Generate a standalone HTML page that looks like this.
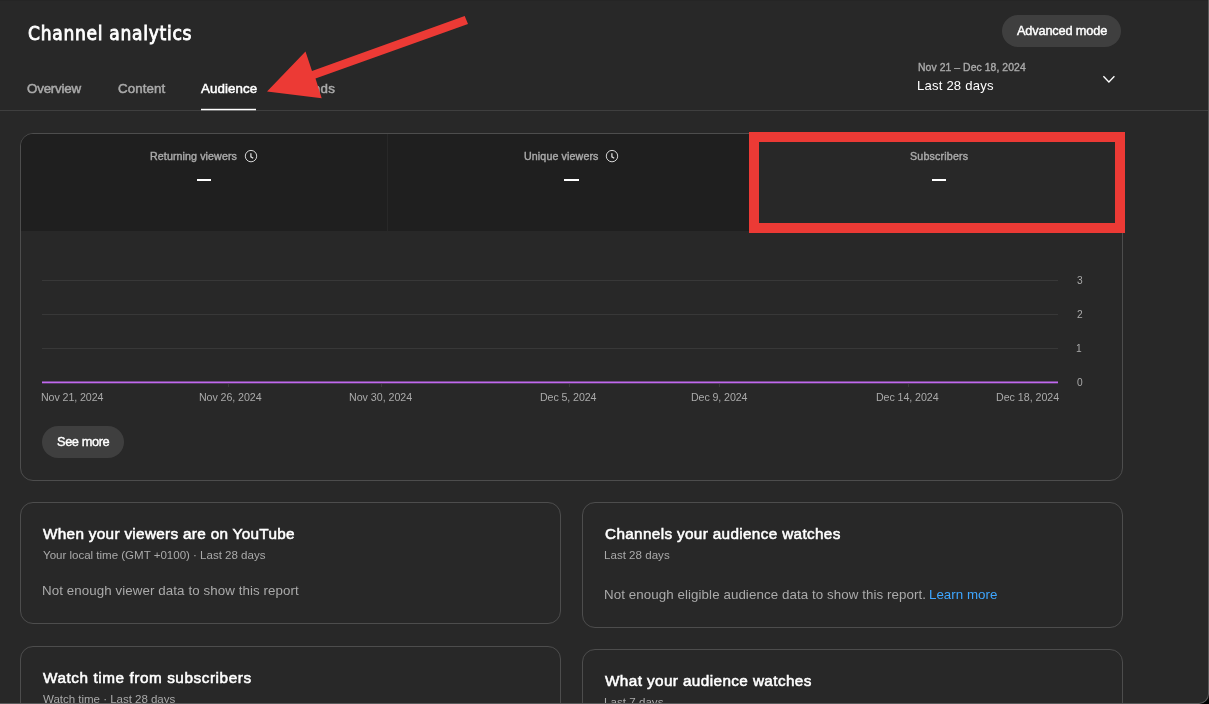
<!DOCTYPE html>
<html lang="en">
<head>
<meta charset="utf-8">
<title>Channel analytics</title>
<style>
  html, body { margin: 0; padding: 0; background: #000; }
  body { width: 1209px; height: 704px; overflow: hidden; position: relative;
         font-family: "Liberation Sans", sans-serif; color: #fff; }
  #win { position: absolute; left: 0; top: 0; width: 1208px; height: 703px;
         background: #282828; border-right: 1px solid #5c5c5c; border-bottom: 1px solid #5c5c5c;
         border-bottom-right-radius: 10px; overflow: hidden; }
  #topshade { position: absolute; left: 0; top: 0; width: 1208px; height: 1px; background: #252525; }
  .abs { position: absolute; }
  .t { position: absolute; white-space: nowrap; line-height: 1; will-change: transform; }

  #tabline { position: absolute; left: 0; top: 110px; width: 1208px; height: 1px; background: #3f3f3f; }
  #tabul { position: absolute; left: 201px; top: 108px; width: 55px; height: 3px; background: linear-gradient(to bottom, #555 0, #555 1px, #fff 1px, #fff 2px, #777 2px, #777 3px); }

  .pill { position: absolute; height: 32px; border-radius: 16px; background: #3f3f3f; }

  .card { position: absolute; border: 1px solid #4d4d4d; border-radius: 13px; box-sizing: border-box; }
  #main { left: 20px; top: 133px; width: 1103px; height: 348px; overflow: hidden; }
  .stat { position: absolute; top: 0; height: 97px; background: #1f1f1f; }
  .dash { position: absolute; height: 2px; width: 14px; background: #fff; top: 179px; }

  .grid { position: absolute; left: 42px; width: 1016px; height: 1px; background: #383838; }
  .tick { position: absolute; top: 383px; width: 1px; height: 4px; background: #3c3c3c; }
  #series { position: absolute; left: 42px; top: 381px; width: 1016px; height: 3px; background: linear-gradient(to bottom, #754a8c 0, #754a8c 1px, #c168ef 1px, #c168ef 2px, #563b64 2px, #563b64 3px); }

  #redbox { position: absolute; left: 749px; top: 132px; width: 376px; height: 101px; border: 10px solid #ec3a35; box-sizing: border-box; }
</style>
</head>
<body>
<div id="win">
  <div id="topshade"></div>

  <!-- header geometry -->
  <div id="tabline"></div>
  <div id="tabul"></div>
  <div class="pill" style="left:1002px;top:15px;width:119px"></div>
  <svg class="abs" style="left:1100px;top:73px" width="18" height="12" viewBox="0 0 18 12"><path d="M3.4 3.2 L8.9 9.0 L14.4 3.2" fill="none" stroke="#fff" stroke-width="1.3"/></svg>

  <!-- main card -->
  <div id="main" class="card">
    <div class="stat" style="left:0;width:366px"></div>
    <div class="stat" style="left:367px;width:366px"></div>
  </div>
  <div class="dash" style="left:197px"></div>
  <div class="dash" style="left:564px;width:15px"></div>
  <div class="dash" style="left:932px"></div>

  <!-- clock icons -->
  <svg class="abs" style="left:243px;top:148px" width="16" height="16" viewBox="0 0 16 16"><circle cx="8" cy="8.1" r="5.7" fill="none" stroke="#dedede" stroke-width="0.95"/><path d="M7.9 5.2 V8.8 L10.2 10.2" fill="none" stroke="#e6e6e6" stroke-width="1.2"/></svg>
  <svg class="abs" style="left:604px;top:148px" width="16" height="16" viewBox="0 0 16 16"><circle cx="8" cy="8.1" r="5.7" fill="none" stroke="#dedede" stroke-width="0.95"/><path d="M7.9 5.2 V8.8 L10.2 10.2" fill="none" stroke="#e6e6e6" stroke-width="1.2"/></svg>

  <!-- chart -->
  <div class="grid" style="top:280px"></div>
  <div class="grid" style="top:314px"></div>
  <div class="grid" style="top:348px"></div>
  <div class="tick" style="left:228px"></div>
  <div class="tick" style="left:381px"></div>
  <div class="tick" style="left:569px"></div>
  <div class="tick" style="left:719px"></div>
  <div class="tick" style="left:908px"></div>
  <div id="series"></div>

  <div class="pill" style="left:42px;top:426px;width:82px"></div>

  <!-- lower cards -->
  <div class="card" style="left:20px;top:502px;width:541px;height:122px"></div>
  <div class="card" style="left:582px;top:502px;width:541px;height:126px"></div>
  <div class="card" style="left:20px;top:646px;width:541px;height:122px"></div>
  <div class="card" style="left:582px;top:649px;width:541px;height:122px"></div>

  <!-- text -->
  <div class="t" id="title" style="left:27.90px;top:24.00px;font-size:19px;color:#ffffff;letter-spacing:0.712px;-webkit-text-stroke:0.8px #ffffff;font-family:'DejaVu Sans Condensed','DejaVu Sans',sans-serif;font-stretch:condensed;">Channel analytics</div>
  <div class="t" id="tab1" style="left:27.40px;top:82.00px;font-size:13.33px;color:#aaaaaa;letter-spacing:-0.200px;-webkit-text-stroke:0.5px #aaaaaa;">Overview</div>
  <div class="t" id="tab2" style="left:118.40px;top:82.00px;font-size:13.33px;color:#aaaaaa;letter-spacing:0.067px;-webkit-text-stroke:0.5px #aaaaaa;">Content</div>
  <div class="t" id="tab3" style="left:201.30px;top:82.00px;font-size:13.33px;color:#ffffff;letter-spacing:0.086px;-webkit-text-stroke:0.5px #ffffff;">Audience</div>
  <div class="t" id="tab4" style="left:292.00px;top:82.00px;font-size:13.33px;color:#aaaaaa;letter-spacing:0.400px;-webkit-text-stroke:0.5px #aaaaaa;">Trends</div>
  <div class="t" id="advt" style="left:1016.60px;top:25.00px;font-size:12.8px;color:#ffffff;letter-spacing:-0.183px;-webkit-text-stroke:0.4px #ffffff;">Advanced mode</div>
  <div class="t" id="dr1" style="left:917.50px;top:63.00px;font-size:10.4px;color:#aaaaaa;letter-spacing:0.070px;-webkit-text-stroke:0.35px #aaaaaa;">Nov 21 – Dec 18, 2024</div>
  <div class="t" id="dr2" style="left:916.50px;top:79.00px;font-size:13.1px;color:#ffffff;letter-spacing:0.200px;">Last 28 days</div>
  <div class="t" id="st1" style="left:149.70px;top:151.00px;font-size:10.67px;color:#aaaaaa;letter-spacing:0.100px;-webkit-text-stroke:0.4px #aaaaaa;">Returning viewers</div>
  <div class="t" id="st2" style="left:523.80px;top:151.00px;font-size:10.67px;color:#aaaaaa;letter-spacing:0.123px;-webkit-text-stroke:0.4px #aaaaaa;">Unique viewers</div>
  <div class="t" id="st3" style="left:909.80px;top:151.00px;font-size:10.67px;color:#aaaaaa;letter-spacing:0.180px;-webkit-text-stroke:0.4px #aaaaaa;">Subscribers</div>
  <div class="t" id="xl0" style="left:41.40px;top:392.00px;font-size:10.67px;color:#aaaaaa;letter-spacing:-0.091px;">Nov 21, 2024</div>
  <div class="t" id="xl1" style="left:198.50px;top:392.00px;font-size:10.67px;color:#aaaaaa;letter-spacing:-0.073px;">Nov 26, 2024</div>
  <div class="t" id="xl2" style="left:348.90px;top:392.00px;font-size:10.67px;color:#aaaaaa;letter-spacing:-0.018px;">Nov 30, 2024</div>
  <div class="t" id="xl3" style="left:540.20px;top:392.00px;font-size:10.67px;color:#aaaaaa;letter-spacing:-0.100px;">Dec 5, 2024</div>
  <div class="t" id="xl4" style="left:690.70px;top:392.00px;font-size:10.67px;color:#aaaaaa;letter-spacing:-0.100px;">Dec 9, 2024</div>
  <div class="t" id="xl5" style="left:875.80px;top:392.00px;font-size:10.67px;color:#aaaaaa;letter-spacing:-0.073px;">Dec 14, 2024</div>
  <div class="t" id="xl6" style="left:995.50px;top:392.00px;font-size:10.67px;color:#aaaaaa;letter-spacing:-0.018px;">Dec 18, 2024</div>
  <div class="t" id="yl0" style="left:1076.70px;top:276.00px;font-size:10.2px;color:#aaaaaa;">3</div>
  <div class="t" id="yl1" style="left:1076.70px;top:310.00px;font-size:10.2px;color:#aaaaaa;">2</div>
  <div class="t" id="yl2" style="left:1075.70px;top:344.00px;font-size:10.2px;color:#aaaaaa;">1</div>
  <div class="t" id="yl3" style="left:1076.70px;top:378.00px;font-size:10.2px;color:#aaaaaa;">0</div>
  <div class="t" id="seemoret" style="left:56.70px;top:436.00px;font-size:12.8px;color:#ffffff;letter-spacing:-0.400px;-webkit-text-stroke:0.4px #ffffff;">See more</div>
  <div class="t" id="h1" style="left:42.50px;top:526.00px;font-size:15.3px;color:#ffffff;letter-spacing:0.316px;-webkit-text-stroke:0.55px #ffffff;">When your viewers are on YouTube</div>
  <div class="t" id="s1" style="left:42.50px;top:550.00px;font-size:11.56px;color:#aaaaaa;letter-spacing:-0.015px;">Your local time (GMT +0100) · Last 28 days</div>
  <div class="t" id="b1" style="left:41.50px;top:584.00px;font-size:13.33px;color:#aaaaaa;letter-spacing:0.083px;">Not enough viewer data to show this report</div>
  <div class="t" id="h2" style="left:605.30px;top:526.00px;font-size:15.3px;color:#ffffff;letter-spacing:0.345px;-webkit-text-stroke:0.55px #ffffff;">Channels your audience watches</div>
  <div class="t" id="s2" style="left:604.30px;top:550.00px;font-size:11.56px;color:#aaaaaa;letter-spacing:0.018px;">Last 28 days</div>
  <div class="t" id="b2" style="left:604.30px;top:588.00px;font-size:13.33px;color:#aaaaaa;letter-spacing:0.079px;">Not enough eligible audience data to show this report.</div>
  <div class="t" id="b2l" style="left:928.80px;top:588.00px;font-size:13.33px;color:#3ea6ff;letter-spacing:0.022px;">Learn more</div>
  <div class="t" id="h3" style="left:42.50px;top:670.00px;font-size:15.3px;color:#ffffff;letter-spacing:0.569px;-webkit-text-stroke:0.55px #ffffff;">Watch time from subscribers</div>
  <div class="t" id="s3" style="left:42.50px;top:694.00px;font-size:11.56px;color:#aaaaaa;letter-spacing:-0.033px;">Watch time · Last 28 days</div>
  <div class="t" id="h4" style="left:605.00px;top:673.00px;font-size:15.3px;color:#ffffff;letter-spacing:0.400px;-webkit-text-stroke:0.55px #ffffff;">What your audience watches</div>
  <div class="t" id="s4" style="left:604.00px;top:697.00px;font-size:11.56px;color:#aaaaaa;letter-spacing:0.040px;">Last 7 days</div>

  <!-- annotations -->
  <div id="redbox"></div>
  <svg class="abs" style="left:0;top:0" width="1209" height="140" viewBox="0 0 1209 140">
    <polygon points="267,91.5 305.5,51.5 312,71 464.7,16 468,24 315.5,78.5 321.7,98.3" fill="#ec3a35"/>
  </svg>
</div>
</body>
</html>
